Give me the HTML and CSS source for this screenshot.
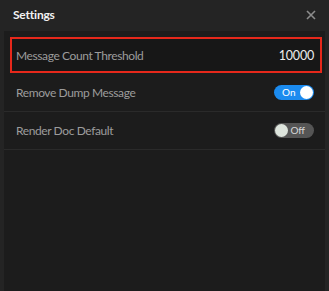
FILE: index.html
```html
<!DOCTYPE html>
<html lang="en">
<head>
    <meta charset="utf-8">
    <link rel="stylesheet" href="styles.css">
</head>
<body>
    <div class="dialog">
        <div class="dialog-header">
            <span class="dialog-title">Settings</span>
            <svg class="close-icon" width="10" height="10" viewBox="0 0 10 10">
                <path d="M1 1 L9 9 M9 1 L1 9" stroke="#8c8c8c" stroke-width="1.6" fill="none"/>
            </svg>
        </div>
        <div class="dialog-body">
            <div class="field-highlight">
                <span class="label">Message Count Threshold</span>
                <span class="value">10000</span>
            </div>
            <div class="setting-row">
                <span class="label">Remove Dump Message</span>
                <div class="toggle on">
                    <span class="toggle-text">On</span>
                    <span class="knob"></span>
                </div>
            </div>
            <div class="setting-row">
                <span class="label">Render Doc Default</span>
                <div class="toggle off">
                    <span class="knob"></span>
                    <span class="toggle-text">Off</span>
                </div>
            </div>
        </div>
    </div>
</body>
</html>
```

FILE: styles.css
```css
body {
    margin: 0;
    padding: 0;
    background-color: #232323;
    font-family: Lato, "Noto Sans", Arial, sans-serif;
}
.dialog {
    width: 329px;
    height: 291px;
    display: flex;
    flex-direction: column;
    background-color: #242424;
}
.dialog-header {
    height: 31px;
    display: flex;
    justify-content: space-between;
    align-items: center;
    padding: 0 13px 0 13px;
}
.dialog-title {
    color: #f2f2f2;
    font-size: 12px;
    font-weight: 700;
    letter-spacing: -0.2px;
    margin-top: -2px;
}
.close-icon {
    margin-top: -2px;
}
.dialog-body {
    flex: 1;
    margin: 0 4px;
    background-color: #1c1c1c;
    padding-top: 6px;
}
.field-highlight {
    height: 32px;
    margin: 0 3px 0 6px;
    border: 2px solid #e6281b;
    background-color: #171717;
    display: flex;
    justify-content: space-between;
    align-items: center;
    padding: 0 6px 0 4px;
}
.label {
    color: #9c9c9c;
    font-size: 12px;
    letter-spacing: -0.4px;
}
.value {
    color: #ececec;
    font-size: 12.5px;
    letter-spacing: -0.2px;
}
.setting-row {
    height: 37px;
    display: flex;
    justify-content: space-between;
    align-items: center;
    padding: 0 11px 0 12px;
    border-bottom: 1px solid #2a2a2a;
}
.field-highlight + .setting-row {
    height: 38px;
}
.toggle {
    width: 40px;
    height: 15px;
    border-radius: 8px;
    display: flex;
    align-items: center;
    box-sizing: border-box;
    padding: 0 1px;
}
.toggle.on {
    background-color: #1b8bef;
    justify-content: space-between;
    padding-left: 8px;
}
.toggle.off {
    background-color: #555555;
    padding-right: 9px;
    justify-content: space-between;
}
.toggle-text {
    color: #ffffff;
    font-size: 10px;
    line-height: 15px;
}
.toggle.off .toggle-text {
    color: #d8d8d8;
}
.knob {
    width: 13px;
    height: 13px;
    border-radius: 50%;
    background-color: #ffffff;
}
.toggle.off .knob {
    background-color: #dde4dc;
}
```
